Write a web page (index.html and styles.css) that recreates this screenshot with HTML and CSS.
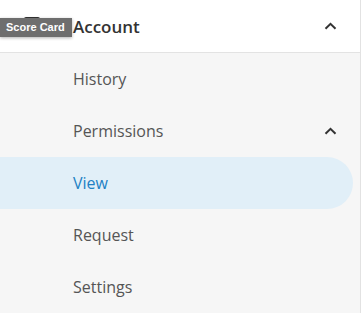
FILE: index.html
```html
<!DOCTYPE html>
<html>
<head>
<meta charset="utf-8">
<link rel="stylesheet" href="styles.css">
</head>
<body>
<nav class="panel">
  <div class="header">
    <span class="hicon">
      <svg width="24" height="24" viewBox="0 0 24 24"><rect x="4" y="3" width="16" height="18" rx="2" fill="#333"/></svg>
    </span>
    <span class="title">Account</span>
    <svg class="chev" width="13" height="8" viewBox="0 0 13 8"><path d="M1.5 6.8 L6.5 1.8 L11.5 6.8" fill="none" stroke="#333" stroke-width="2"/></svg>
    <span class="tooltip">Score Card</span>
  </div>
  <ul class="sub">
    <li class="item">History</li>
    <li class="item">Permissions
      <svg class="chev" width="13" height="8" viewBox="0 0 13 8"><path d="M1.5 6.8 L6.5 1.8 L11.5 6.8" fill="none" stroke="#333" stroke-width="2"/></svg>
    </li>
    <li class="item active">View</li>
    <li class="item">Request</li>
    <li class="item">Settings</li>
  </ul>
</nav>
</body>
</html>
```
FILE: styles.css
```css
html, body { margin: 0; padding: 0; background: #fff; }
body { font-family: "Open Sans", "Liberation Sans", sans-serif; }
.panel { width: 360px; border-right: 1px solid #e2e2e2; }
.header {
  position: relative;
  height: 52px;
  border-bottom: 1px solid #e3e3e3;
  display: flex;
  align-items: center;
  padding: 0 23px 0 73px;
}
.hicon { position: absolute; left: 20px; top: 14px; }
.title { font-size: 17px; font-weight: 600; color: #333; flex: 1; }
.tooltip {
  position: absolute;
  left: 0; top: 18px;
  height: 19px;
  padding: 0 7px 0 6px;
  background: #6e6e6e;
  color: #fff;
  font-family: "Liberation Sans", Arial, sans-serif;
  font-weight: bold;
  font-size: 11px;
  line-height: 19px;
  box-shadow: 0 1px 3px rgba(0,0,0,0.3);
}
.sub { list-style: none; margin: 0; padding: 0; background: #f6f6f6; }
.item {
  height: 52px;
  display: flex;
  align-items: center;
  justify-content: space-between;
  padding: 0 23px 0 73px;
  font-size: 16px;
  color: #555;
}
.item.active {
  background: #e1eff8;
  color: #2181c4;
  width: 353px;
  box-sizing: border-box;
  border-radius: 0 26px 26px 0;
}
```
